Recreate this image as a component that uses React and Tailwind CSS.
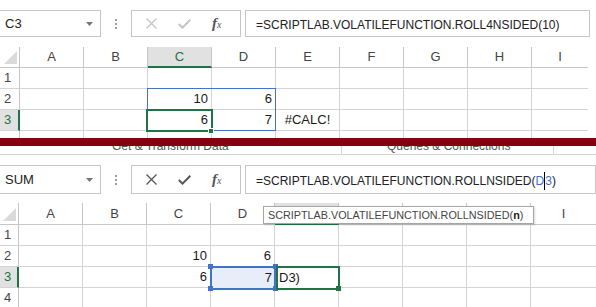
import React from 'react'

const COLS = ['A', 'B', 'C', 'D', 'E', 'F', 'G', 'H', 'I']

// name box + the three formula-bar buttons + formula input
function FormulaBar({ name, active, children }) {
  const iconColor = active ? '#555555' : '#c4c4c4'
  return (
    <div className="flex items-stretch h-full">
      <div className="w-[101px] shrink-0 border border-l-0 border-[#c6c6c6] flex items-center justify-between pl-[5px] pr-[7px]">
        <span className="text-[13px] text-[#222] pt-[1px]">{name}</span>
        <svg width="7" height="4" viewBox="0 0 7 4">
          <path d="M0 0h7L3.5 4z" fill="#777" />
        </svg>
      </div>
      <div className="ml-[14px] w-[2px] flex flex-col justify-center gap-[2px]">
        <span className="block w-[2px] h-[2px] bg-[#9a9a9a]" />
        <span className="block w-[2px] h-[2px] bg-[#9a9a9a]" />
        <span className="block w-[2px] h-[2px] bg-[#9a9a9a]" />
      </div>
      <div className="ml-[14px] w-[110px] shrink-0 border border-[#c6c6c6] flex items-center">
        <svg className="ml-[14px]" width="11" height="11" viewBox="0 0 11 11">
          <path d="M0.5 0.5L10.5 10.5M10.5 0.5L0.5 10.5" stroke={iconColor} strokeWidth="1.3" />
        </svg>
        <svg className="ml-[21px]" width="13" height="10" viewBox="0 0 13 10">
          <path d="M0.8 5L4.5 8.6L12.3 0.8" stroke={iconColor} strokeWidth="2" fill="none" />
        </svg>
        <span className="ml-[21px] font-['Liberation_Serif',serif] italic font-bold text-[15px] leading-none text-[#555]">
          f<span className="text-[10px] font-normal italic">x</span>
        </span>
      </div>
      <div className="ml-[4px] flex-1 border border-[#c6c6c6] flex items-center pl-[10px] pt-[2px] text-[12px] text-[#222] whitespace-nowrap">
        {children}
      </div>
    </div>
  )
}

function Sheet({ headW, headH, widthClass, activeCol, hidden = [], rows, children }) {
  return (
    <div className={`relative ${widthClass}`}>
      <div className={`flex ${headH}`}>
        <div className={`${headW} shrink-0 border-r border-b border-[#c6c6c6] flex items-end justify-end pr-[2px] pb-[3px]`}>
          <svg width="13" height="13" viewBox="0 0 13 13">
            <path d="M13 0V13H0z" fill="#dadada" />
          </svg>
        </div>
        {COLS.map((c, i) => (
          <div
            key={c}
            className={`${i === 8 ? 'flex-1' : 'w-[64px] shrink-0 border-r'} flex items-center justify-center text-[13px] ${
              c === activeCol
                ? 'bg-[#e1e1e1] text-[#217346] border-b-2 border-b-[#217346] border-r-[#c6c6c6]'
                : 'text-[#444] border-b border-[#c6c6c6]'
            }`}
          >
            {hidden.includes(c) ? null : c}
          </div>
        ))}
      </div>
      {rows.map((r) => (
        <div key={r.n} className="flex h-[21px]">
          <div
            className={`${headW} shrink-0 border-b border-[#d4d4d4] flex items-center pl-[4px] text-[13px] ${
              r.active
                ? 'bg-[#e1e1e1] text-[#217346] border-r-2 border-r-[#217346]'
                : 'text-[#444] border-r border-r-[#c6c6c6]'
            }`}
          >
            {r.label === false ? null : r.n}
          </div>
          {COLS.map((c, i) => {
            const v = r.cells ? r.cells[c] : null
            return (
              <div
                key={c}
                className={`${i === 8 ? 'flex-1' : 'w-[64px] shrink-0 border-r'} border-b border-[#d4d4d4] flex items-center text-[13px] text-[#1a1a1a] whitespace-nowrap ${
                  v && v.startsWith('#') ? 'justify-center' : 'justify-end pr-[3px]'
                }`}
              >
                {v}
              </div>
            )
          })}
        </div>
      ))}
      {children}
    </div>
  )
}

// row 4 is cut off by the red divider, its number doesn't show
const TOP_ROWS = [
  { n: 1 },
  { n: 2, cells: { C: '10', D: '6' } },
  { n: 3, active: true, cells: { C: '6', D: '7', E: '#CALC!' } },
  { n: 4, label: false },
]

// D3 and E3 are drawn by the selection overlays below
const BOTTOM_ROWS = [
  { n: 1 },
  { n: 2, cells: { C: '10', D: '6' } },
  { n: 3, active: true, cells: { C: '6' } },
  { n: 4 },
]

export default function App() {
  return (
    <div className="w-[596px] h-[307px] overflow-hidden bg-white font-['Liberation_Sans',Arial,sans-serif] flex flex-col">
      {/* upper capture: before recalculation */}
      <div className="h-[138px] shrink-0 overflow-hidden pt-[10px]">
        <div className="h-[27px] w-[590px]">
          <FormulaBar name="C3">=SCRIPTLAB.VOLATILEFUNCTION.ROLL4NSIDED(10)</FormulaBar>
        </div>
        <div className="h-[10px]" />
        <Sheet headW="w-[20px]" headH="h-[21px]" widthClass="w-[588px]" activeCol="C" rows={TOP_ROWS}>
          <div className="absolute left-[147px] top-[41px] w-[129px] h-[43px] border border-[#4472c4]" />
          <div className="absolute left-[146px] top-[62px] w-[67px] h-[23px] border-2 border-[#217346]" />
          <div className="absolute left-[208px] top-[81px] w-[6px] h-[6px] bg-[#217346] border border-white" />
        </Sheet>
      </div>

      <div className="h-[8px] shrink-0 bg-[#82000f]" />

      {/* lower capture: editing E3 */}
      <div className="flex-1 overflow-hidden">
        <div className="h-[9px] flex border-b border-[#d5d5d5] overflow-hidden text-[12px] text-[#555] whitespace-nowrap">
          <div className="w-[342px] border-r border-[#d5d5d5] pl-[112px]">
            <span className="block leading-[12px] -mt-[6px]">Get &amp; Transform Data</span>
          </div>
          <div className="w-[212px] border-r border-[#d5d5d5] pl-[45px]">
            <span className="block leading-[12px] -mt-[6px]">Queries &amp; Connections</span>
          </div>
        </div>
        <div className="h-[10px]" />
        <div className="h-[29px]">
          <FormulaBar name="SUM" active>
            =SCRIPTLAB.VOLATILEFUNCTION.ROLLNSIDED(
            <span className="text-[#3b6fd1]">D</span>
            <span className="text-[#3b6fd1] border-l border-black">3</span>)
          </FormulaBar>
        </div>
        <div className="h-[9px]" />
        <Sheet
          headW="w-[19px]"
          headH="h-[22px]"
          widthClass="w-full"
          activeCol="E"
          hidden={['E', 'F', 'G', 'H']}
          rows={BOTTOM_ROWS}
        >
          <div className="absolute left-[210px] top-[63px] w-[66px] h-[24px] border-2 border-[#4472c4] bg-[#e8eef9] flex items-center justify-end pr-[2px] text-[13px] text-[#1a1a1a]">
            7
          </div>
          <div className="absolute left-[208px] top-[61px] w-[5px] h-[5px] bg-[#4472c4]" />
          <div className="absolute left-[273px] top-[61px] w-[5px] h-[5px] bg-[#4472c4]" />
          <div className="absolute left-[208px] top-[83px] w-[5px] h-[5px] bg-[#4472c4]" />
          <div className="absolute left-[273px] top-[83px] w-[5px] h-[5px] bg-[#4472c4]" />
          <div className="absolute left-[276px] top-[63px] w-[64px] h-[24px] border-2 border-[#217346] bg-white flex items-center pl-[1px] text-[13px] text-[#1a1a1a]">
            D3)
          </div>
          <div className="absolute left-[336px] top-[83px] w-[5px] h-[5px] bg-[#217346]" />
          <div className="absolute left-[263px] top-[3px] w-[271px] h-[18px] bg-white border border-[#a6a6a6] shadow-[1px_1px_2px_rgba(0,0,0,0.15)] flex items-center pl-[4px] text-[10.8px] text-[#444] whitespace-nowrap">
            SCRIPTLAB.VOLATILEFUNCTION.ROLLNSIDED(<b className="text-[#222]">n</b>)
          </div>
        </Sheet>
      </div>
    </div>
  )
}
